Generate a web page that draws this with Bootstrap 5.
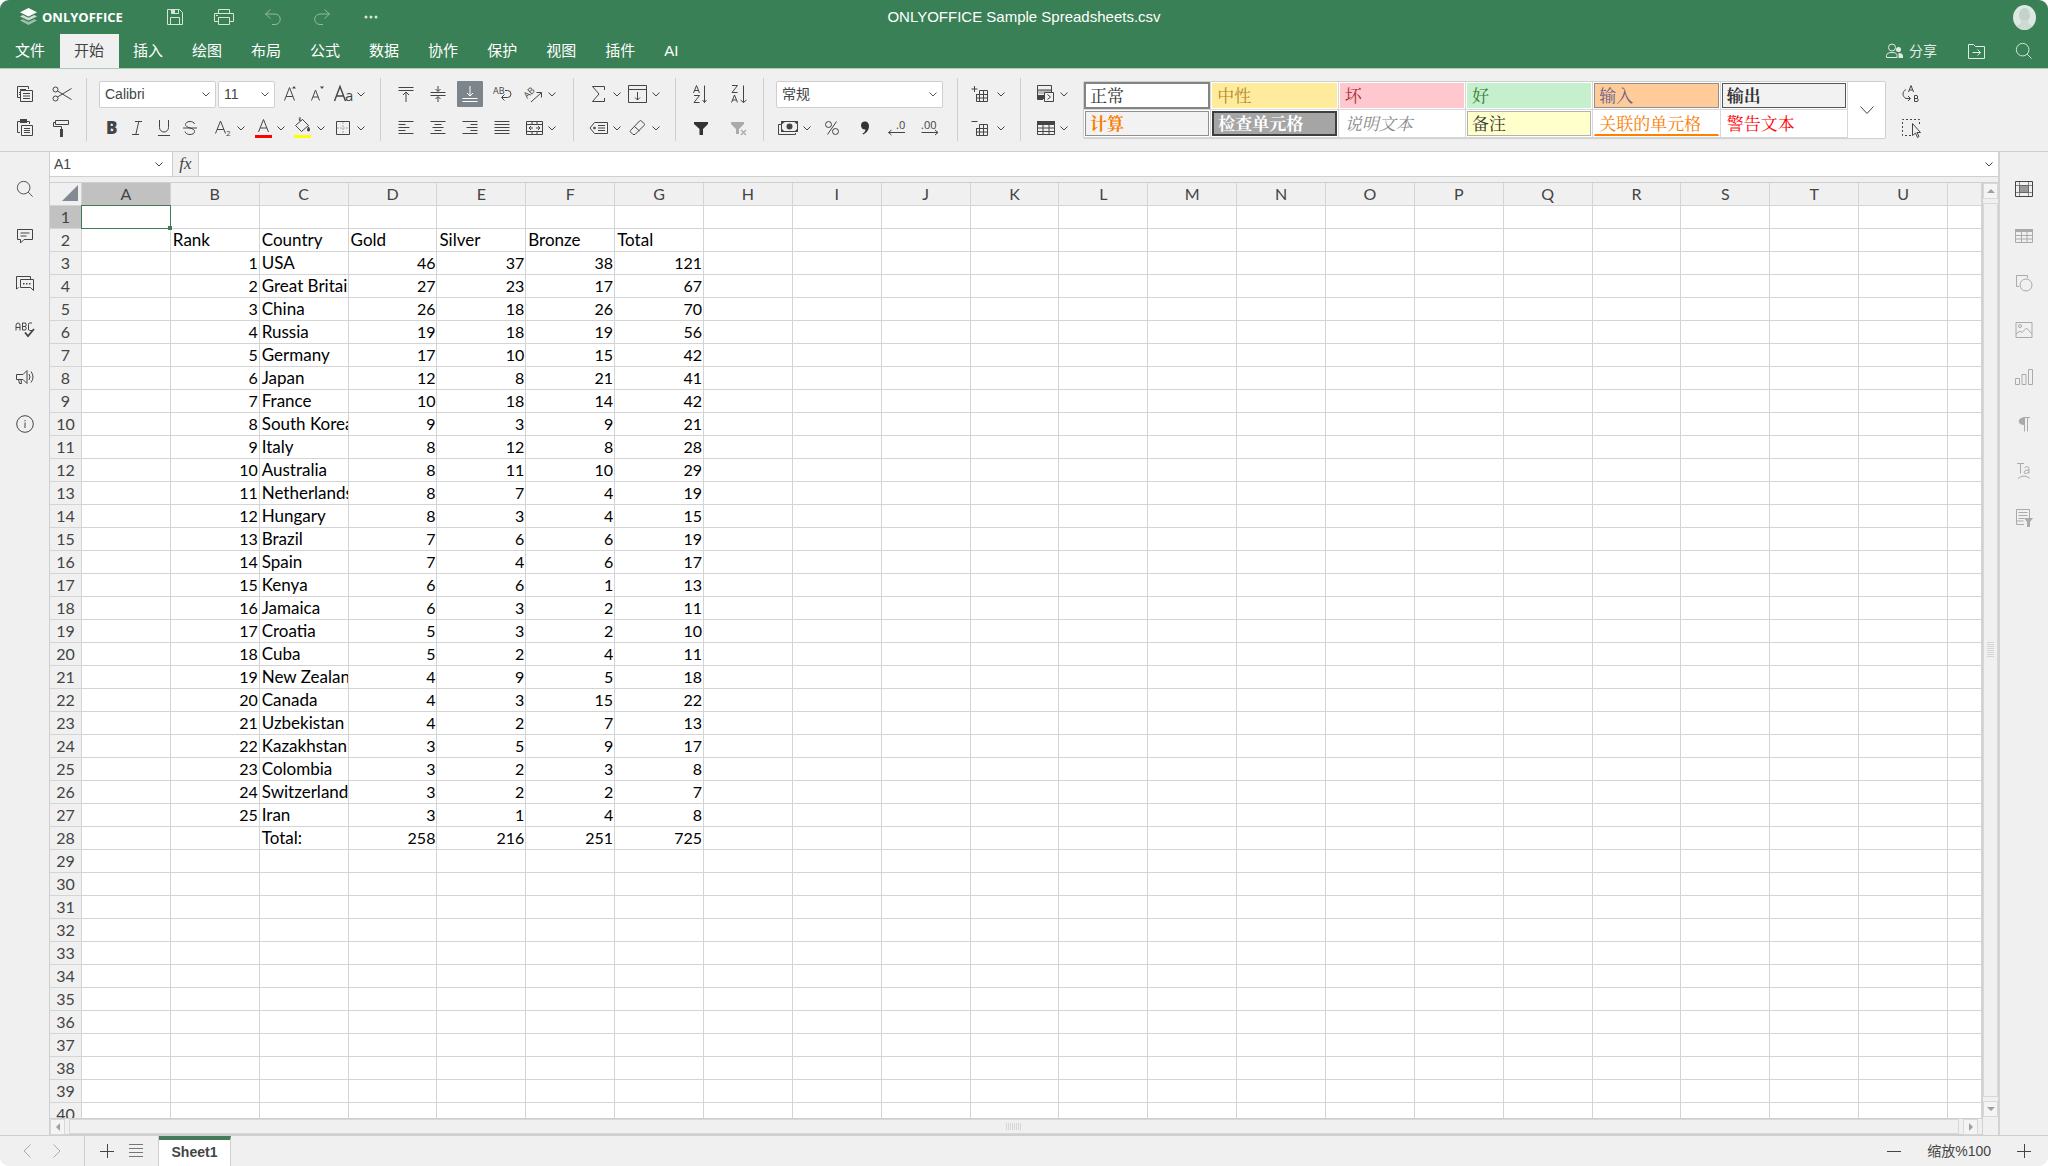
<!DOCTYPE html>
<html lang="zh-CN">
<head>
<meta charset="utf-8">
<meta name="viewport" content="width=device-width, initial-scale=1">
<title>ONLYOFFICE Sample Spreadsheets.csv</title>
<link href="https://cdn.jsdelivr.net/npm/bootstrap@5.3.0/dist/css/bootstrap.min.css" rel="stylesheet">
<style>
  :root { --brand: #3a8056; --chrome: #f0f0f0; --line: #cfcfcf; --ink: #444; }
  html, body { height: 100%; }
  body { font-family: "Liberation Sans", "Noto Sans CJK SC", sans-serif; font-size: 15px; color: var(--ink); background: #fff; overflow: hidden; }
  .app { height: 100vh; background: var(--chrome); border-radius: 9px; overflow: hidden; }
  svg { display: block; fill: none; stroke: currentColor; stroke-width: 1; flex: none; overflow: visible; }
  svg .f { fill: currentColor; stroke: none; }
  svg text { fill: currentColor; stroke: none; font-family: "Open Sans", sans-serif; }
  button { border: 0; background: none; padding: 0; color: inherit; }

  /* title bar and tabs */
  .app-head { background: var(--brand); color: #fff; border-bottom: 1px solid #a9cbb7; }
  .title-row { display: grid; grid-template-columns: 1fr auto 1fr; height: 34px; align-items: center; font-size: 15px; }
  .brand { width: 126px; margin-left: 19px; color: #fff; font: bold 13px "Open Sans", sans-serif; }
  .quick { margin-left: 17px; gap: 23px; }
  .quick button { width: 26px; height: 26px; opacity: .8; }
  .quick button:disabled { opacity: .45; }
  .avatar { width: 23px; height: 25px; margin-right: 12px; border-radius: 50%; background: #dce8e1; overflow: hidden; }
  .menu-tabs { height: 34px; padding-left: 1px; }
  .menu-tabs .nav-link { padding: 0 15px 0 14px; line-height: 33px; color: #fff; font-size: 15px; border-radius: 0; }
  .menu-tabs .nav-link.active { background: var(--chrome); color: var(--ink); }
  .head-tools { gap: 26px; padding-right: 15px; font-size: 14px; opacity: .85; }
  .head-tools .share { gap: 6px; }

  /* toolbar */
  .ribbon { height: 84px; border-bottom: 1px solid var(--line); }
  .tool-group { display: flex; flex-direction: column; gap: 8px; padding: 12px 11px 0 12px; }
  .tool-group > div { display: flex; height: 26px; align-items: center; }
  .tool-group.ruled { border-right: 1px solid var(--line); margin: 9px 0; padding-top: 3px; }
  .tool-group.mid { padding-right: 14px; }
  .tool-group.wide { padding-right: 16px; }
  .tool-group.last { padding-right: 124px; }
  .g-clip > div { gap: 11px; }
  .g-align > div { gap: 6px; }
  .g-sum > div { gap: 3px; }
  .g-sort > div { gap: 12px; }
  .tb { width: 26px; height: 26px; display: flex; align-items: center; justify-content: center; flex: none; border-radius: 1px; }
  .tb.drop { width: 36px; }
  .tb.on { background: #7d858c; color: #fff; }
  .tb.off { color: #aaa; }
  .form-select.pick { height: 27px; padding: 0 24px 0 5px; font-size: 14px; line-height: 25px; color: var(--ink); border: 1px solid var(--line); border-radius: 2px; background-color: #fff; background-position: right 5px center; background-size: 8px 8px;
    --bs-form-select-bg-img: url("data:image/svg+xml,%3csvg xmlns='http://www.w3.org/2000/svg' viewBox='0 0 8 8'%3e%3cpath fill='none' stroke='%23555' d='M.5 2.5 4 6l3.5-3.5'/%3e%3c/svg%3e"); }
  .pick.w-name { width: 117px; margin-right: 2px; }
  .pick.w-size { width: 57px; margin-right: 3px; }
  .pick.w-format { width: 167px; }

  /* cell style gallery */
  .gallery { flex: 1 1 0; min-width: 0; height: 58px; margin-top: 12px; background: #fff; border: 1px solid var(--line); border-radius: 2px; }
  .gallery-grid { display: grid; grid-template-columns: repeat(6, 1fr); grid-auto-rows: 28px; flex: 1; min-width: 0; }
  .swatch { border: solid #d8d8d8; border-width: 0 1px 1px 0; padding: 1px; }
  .swatch span { display: block; height: 100%; padding-left: 4px; border: 1px solid transparent; text-align: left; white-space: nowrap; overflow: hidden; font: 17px/22px "Noto Serif CJK SC", "Noto Sans CJK SC", serif; color: #333; }
  .swatch.sel { padding: 0; }
  .swatch.sel span { border: 2px solid #848484; line-height: 22px; }
  .s-neutral span { background: #ffeb9c; color: #b3862f; }
  .s-bad span { background: #ffc7ce; color: #b02a37; }
  .s-good span { background: #c6efce; color: #2f7d32; }
  .s-input span { background: #ffcc99; border-color: #8f8f8f; color: #66608a; }
  .s-output span { background: #f2f2f2; border-color: #555; font-weight: bold; }
  .s-calc span { background: #f2f2f2; border-color: #8f8f8f; color: #fa7d00; font-weight: bold; }
  .s-check span { background: #a5a5a5; border: 2px solid #3f3f3f; line-height: 20px; color: #fff; font-weight: bold; }
  .s-explain span { color: #8a8a8a; font-style: italic; }
  .s-note span { background: #ffffcc; border-color: #b2b2b2; }
  .s-link span { color: #fa7d00; border-bottom: 2px solid #ff8001; }
  .s-warn span { color: #f00; }
  .gallery-more { width: 37px; display: flex; align-items: center; justify-content: center; }

  /* side bars */
  .work { min-height: 0; }
  .side { width: 50px; padding-top: 24px; display: flex; flex-direction: column; align-items: center; gap: 21px; flex: none; }
  .side.start { border-right: 1px solid var(--line); }
  .side.end { border-left: 2px solid #d3d3d3; color: #aaa; }
  .side .current { color: #444; }
  .pane { min-width: 0; }

  /* formula bar */
  .formula { height: 25px; border-bottom: 1px solid var(--line); background: #fff; }
  .formula input { border: 0; outline: 0; background: none; font-size: 14px; color: var(--ink); padding: 0 0 0 4px; min-width: 0; }
  .name-box { width: 123px; border-right: 1px solid var(--line); }
  .name-box input { width: 90px; }
  .fx { width: 26px; background: var(--chrome); border-right: 1px solid var(--line); font: italic 17px/24px "Liberation Serif", serif; }

  /* grid */
  .sheet-pane { margin-top: 5px; border-top: 1px solid var(--line); min-height: 0; }
  .grid-view { overflow: hidden; background: #fff; }
  .sheet { width: 100%; table-layout: fixed; border-collapse: separate; border-spacing: 0; font: 17px/22px Lato, sans-serif; color: #000; }
  .sheet col.rowno { width: 32px; }
  .sheet col.data { width: 4.6%; }
  .sheet th, .sheet td { height: 23px; padding: 0 2px; border: solid #d4d4d4; border-width: 0 1px 1px 0; white-space: nowrap; overflow: hidden; }
  .sheet th { background: var(--chrome); color: var(--ink); font-size: 16px; font-weight: normal; text-align: center; }
  .sheet .num { font-size: 16px; text-align: right; padding-right: 1px; }
  .sheet .hot { background: #c1c1c1; }
  .sheet .cursor { position: relative; overflow: visible; }
  .sheet .cursor::before { content: ""; position: absolute; inset: -1px; border: 1px solid #3f7b57; }
  .sheet .cursor::after { content: ""; position: absolute; right: -2px; bottom: -2px; width: 4px; height: 4px; background: #3f7b57; }
  .sheet .corner { padding: 0 2px 2px 0; }
  .sheet .corner svg { margin-left: auto; color: #848a94; }
  .bar { background: var(--chrome); color: #a0a0a0; }
  .bar.v { width: 16px; border-left: 1px solid var(--line); }
  .bar.h { height: 17px; border-top: 1px solid var(--line); border-bottom: 1px solid var(--line); }
  .bar button { width: 15px; height: 16px; display: flex; align-items: center; justify-content: center; border: 1px solid #d8d8d8; background: #f4f4f4; flex: none; }
  .bar .thumb { flex: 1; display: flex; align-items: center; justify-content: center; border: 1px solid #d8d8d8; color: #d6d6d6; }
  .bar .scroll-end { margin-bottom: 18px; }

  /* status bar */
  .status { height: 31px; border-top: 1px solid var(--line); font-size: 14px; }
  .status .cellgroup { height: 30px; border-right: 1px solid var(--line); display: flex; align-items: center; }
  .cellgroup.nav-arrows { width: 85px; padding-left: 14px; gap: 4px; color: #aaa; }
  .cellgroup.sheet-ops { width: 74px; padding-left: 9px; gap: 3px; }
  .zoom-ctl { gap: 20px; padding-right: 11px; }
  .sheet-tab { width: 72px; height: 30px; background: #fff; border-top: 4px solid #457a5b; border-right: 1px solid var(--line); font-size: 14px; font-weight: bold; color: var(--ink); text-decoration: none; text-align: center; line-height: 25px; }
</style>
<script src="https://cdn.jsdelivr.net/npm/bootstrap@5.3.0/dist/js/bootstrap.bundle.min.js"></script>
</head>
<body>
<svg width="0" height="0" class="position-absolute">
  <symbol id="car" viewBox="0 0 10 10"><path d="M1.5 3.5 5 7l3.5-3.5"/></symbol>
  <symbol id="find" viewBox="0 0 20 20"><circle cx="8.500" cy="8.500" r="7"/><path d="m13.500 13.500 5 5"/></symbol>
</svg>
<div class="app d-flex flex-column">
  <header class="app-head">
    <div class="title-row">
      <div class="d-flex align-items-center">
        <a class="brand d-flex align-items-center gap-1 text-decoration-none" href="#">
          <svg width="19" height="18" viewBox="0 0 19 18"><path class="f" d="M9.500 0 18 4.200 9.500 8.400 1 4.200z"/><path class="f" opacity=".75" d="M1 8.400 3.800 7l5.700 2.800L15.200 7 18 8.400l-8.500 4.200z"/><path class="f" opacity=".5" d="m1 12.600 2.800-1.400L9.500 14l5.700-2.800 2.800 1.400L9.500 17z"/></svg>
          ONLYOFFICE</a>
        <div class="quick d-flex">
          <button class="tb" aria-label="保存"><svg width="18" height="18"><path d="M1.500 1.500h12l3 3v12h-15zM4.500 16V9.500h9V16M5.500 1.500v4h7v-4"/><path class="f" d="M6 2h3v3H6z"/></svg></button>
          <button class="tb" aria-label="打印"><svg width="20" height="18"><path d="M4.500 5V1.500h11V5M4.500 13.500h-4v-8h19v8h-4M4.500 9.500h11v7h-11zM2 7.500h2"/></svg></button>
          <button class="tb" disabled aria-label="撤消"><svg width="18" height="18"><path d="M6.500 1.500 1.500 6l5 4.500M1.500 6H11a5 5 0 0 1 0 10.500H8"/></svg></button>
          <button class="tb" disabled aria-label="重做"><svg width="18" height="18"><path d="M11.500 1.500l5 4.500-5 4.500M16.500 6H7a5 5 0 0 0 0 10.500h3"/></svg></button>
          <button class="tb" aria-label="更多"><svg width="14" height="4"><circle class="f" cx="2" cy="2" r="1.500"/><circle class="f" cx="7" cy="2" r="1.500"/><circle class="f" cx="12" cy="2" r="1.500"/></svg></button>
        </div>
      </div>
      <div>ONLYOFFICE Sample Spreadsheets.csv</div>
      <div class="avatar ms-auto"><svg width="23" height="25"><ellipse cx="11.500" cy="10" rx="5.500" ry="7" fill="#c3d3ca" stroke="none"/><path d="M8 15h7v3l4 3v4H4v-4l4-3z" fill="#cddad3" stroke="none"/></svg></div>
    </div>
    <div class="d-flex justify-content-between">
      <nav class="menu-tabs nav flex-nowrap">
        <a class="nav-link" href="#">文件</a><a class="nav-link active" href="#">开始</a><a class="nav-link" href="#">插入</a><a class="nav-link" href="#">绘图</a><a class="nav-link" href="#">布局</a><a class="nav-link" href="#">公式</a><a class="nav-link" href="#">数据</a><a class="nav-link" href="#">协作</a><a class="nav-link" href="#">保护</a><a class="nav-link" href="#">视图</a><a class="nav-link" href="#">插件</a><a class="nav-link" href="#">AI</a>
      </nav>
      <div class="head-tools d-flex align-items-center">
        <button class="share d-flex align-items-center"><svg width="17" height="16"><circle cx="6" cy="4.500" r="3.500"/><path d="M.5 14.500v-2c0-2 2-3 5.500-3s5 1 5 3v2z"/><circle class="f" cx="12.500" cy="6.500" r="2.500"/><path class="f" d="M12.500 10c3 0 4.500 1 4.500 3v2h-4.500z"/></svg>分享</button>
        <button aria-label="打开文件位置" class="tb"><svg width="17" height="15"><path d="M.5.500h5l2 2h9v12H.5zM4.500 8.500h8M9.500 5.500l3 3-3 3"/></svg></button>
        <button aria-label="搜索" class="d-flex"><svg width="18" height="18"><use href="#find"/></svg></button>
      </div>
    </div>
  </header>

  <div class="ribbon d-flex align-items-start" role="toolbar" aria-label="开始">
    <div class="tool-group ruled g-clip">
      <div>
        <button class="tb" aria-label="复制"><svg width="18" height="18"><path d="M4 12.500H1.500v-11h11V4M4 4.500h6"/><path d="M4.500 5.500h12v11h-12zM7 8.500h7M7 11h7M7 13.500h7M3 7.500h1.500M3 9.500h1.500"/></svg></button>
        <button class="tb" aria-label="剪切"><svg width="20" height="18"><circle cx="3.500" cy="4.500" r="2.500"/><circle cx="3.500" cy="13.500" r="2.500"/><path d="M5.500 6 19.500 14.500M5.500 12 19.500 3.500"/></svg></button>
      </div>
      <div>
        <button class="tb" aria-label="粘贴"><svg width="18" height="18"><path d="M4 13.500H1.500v-11h12V5"/><path class="f" d="M4 0h7v4H4z"/><path d="M5.500 6.500h11v10h-11zM8 9.500h6M8 11.500h6M8 13.500h6"/></svg></button>
        <button class="tb" aria-label="格式刷"><svg width="18" height="18"><path d="M2.500 1.500h13v4h-13zM2.500 3.500h-2v4h8V10"/><path class="f" d="M7 10h3v8H7z"/></svg></button>
      </div>
    </div>
    <div class="tool-group ruled mid">
      <div>
        <select class="form-select pick w-name" aria-label="字体"><option>Calibri</option></select>
        <select class="form-select pick w-size" aria-label="字号"><option>11</option></select>
        <button class="tb" aria-label="增大字号"><svg width="18" height="18"><path d="m2.500 15.500 5-13 5 13M4.200 11.500h6.600"/><path class="f" d="M10 3.500 12 1l2 2.500z"/></svg></button>
        <button class="tb" aria-label="减小字号"><svg width="18" height="18"><path d="m3.500 15.500 4-10.500 4 10.500M5 12h5.200"/><path class="f" d="M12 1.500h4L14 4z"/></svg></button>
        <button class="tb drop" aria-label="更改大小写"><svg width="26" height="20"><path stroke-width="1.400" d="m4.500 17 5.500-14.500L15.500 17M6.500 12h7"/><text x="15" y="17" font-size="15">a</text></svg><svg width="10" height="10"><use href="#car"/></svg></button>
      </div>
      <div class="justify-content-between">
        <div class="d-flex gap-1px">
          <button class="tb" aria-label="粗体"><svg width="16" height="18"><text x="2" y="15" font-size="17" font-weight="800">B</text></svg></button>
          <button class="tb" aria-label="斜体"><svg width="16" height="18"><path d="M5 2.500h7M2 15.500h7M8.800 2.500l-3 13"/></svg></button>
          <button class="tb" aria-label="下划线"><svg width="16" height="18"><path d="M3.500 1v7.500a4.500 4.500 0 0 0 9 0V1M2 16.500h12"/></svg></button>
          <button class="tb" aria-label="删除线"><svg width="16" height="18"><path d="M12.500 5C12 3 10 2.500 8 2.500c-3 0-4.500 1.500-4.500 3S5 8 8 9s4.500 1.500 4.500 3.500-2 3-4.500 3-4.500-1-5-3M1 9h14"/></svg></button>
        </div>
        <div class="d-flex gap-1">
          <button class="tb drop" aria-label="下标"><svg width="26" height="18"><path d="m5.500 14.500 5-12.500 5 12.500M7.200 10.500h6.600"/><text x="16" y="17" font-size="8">2</text></svg><svg width="10" height="10"><use href="#car"/></svg></button>
          <button class="tb drop" aria-label="字体颜色"><svg width="26" height="22"><path d="m8.500 15 5-12.500 5 12.500M10.200 11h6.600"/><path fill="#f00" stroke="none" d="M5 18h17v3H5z"/></svg><svg width="10" height="10"><use href="#car"/></svg></button>
          <button class="tb drop" aria-label="填充颜色"><svg width="26" height="22"><path d="m12.500 2.500 6 6-7 6-6-6zM10 0v4l-1-2.500M18 8l-6-6"/><path class="f" d="M18.500 9.500c2 2 2 5 0 5s-2-3 0-5z"/><path fill="#ff0" stroke="none" d="M4 18h17v3H4z"/></svg><svg width="10" height="10"><use href="#car"/></svg></button>
          <button class="tb drop" aria-label="边框"><svg width="26" height="16"><path d="M6.500 1.500h13v13h-13z"/><path stroke="#aaa" stroke-dasharray="2 1" d="M13 2v12M7 8h12"/></svg><svg width="10" height="10"><use href="#car"/></svg></button>
        </div>
      </div>
    </div>
    <div class="tool-group ruled wide g-align">
      <div>
        <button class="tb" aria-label="顶端对齐"><svg width="16" height="16"><path d="M.5 1.500h15M.5 4.500h15M8 16V6M5 9l3-3 3 3"/></svg></button>
        <button class="tb" aria-label="垂直居中"><svg width="16" height="16"><path d="M.5 6.500h15M.5 9.500h15M8 0v5M8 16v-5M5.500 3 8 5.500 10.500 3M5.500 13 8 10.500l2.500 2.500"/></svg></button>
        <button class="tb on" aria-label="底端对齐" aria-pressed="true"><svg width="16" height="18"><path d="M.5 13.500h15M.5 16.500h15M8 1v10M5 8l3 3 3-3"/></svg></button>
        <button class="tb" aria-label="自动换行"><svg width="20" height="18"><text x="1" y="9" font-size="9">AB</text><path d="M13 5.500h2.500a3.500 3.500 0 0 1 0 7H10M12.500 9.500l-3 3 3 3"/></svg></button>
        <button class="tb drop" aria-label="方向"><svg width="26" height="20"><text x="3" y="13" font-size="9" transform="rotate(-45 7 10)">AB</text><path d="m10 18 10-9M15.500 8.500h5v5"/></svg><svg width="10" height="10"><use href="#car"/></svg></button>
      </div>
      <div>
        <button class="tb" aria-label="左对齐"><svg width="16" height="14"><path d="M.5.500h15M.5 3.500h7M.5 6.500h11M.5 9.500h7M.5 12.500h15"/></svg></button>
        <button class="tb" aria-label="居中"><svg width="16" height="14"><path d="M.5.500h15M4.500 3.500h7M2.500 6.500h11M4.500 9.500h7M.5 12.500h15"/></svg></button>
        <button class="tb" aria-label="右对齐"><svg width="16" height="14"><path d="M.5.500h15M8.500 3.500h7M4.500 6.500h11M8.500 9.500h7M.5 12.500h15"/></svg></button>
        <button class="tb" aria-label="两端对齐"><svg width="16" height="14"><path d="M.5.500h15M.5 3.500h15M.5 6.500h15M.5 9.500h15M.5 12.500h15"/></svg></button>
        <button class="tb drop" aria-label="合并"><svg width="26" height="14"><path d="M5.500 .5h16v13h-16zM5.500 3.500h16M5.500 10.500h16M11 .5v3M16 .5v3M11 10.500v3M16 10.500v3M8 7h4M15 7h4M10 5 8 7l2 2M17 5l2 2-2 2"/></svg><svg width="10" height="10"><use href="#car"/></svg></button>
      </div>
    </div>
    <div class="tool-group ruled mid g-sum">
      <div>
        <button class="tb drop" aria-label="求和"><svg width="26" height="18"><path d="M18.500 5V1.500h-12L13 9l-6.500 7.500h12V13"/></svg><svg width="10" height="10"><use href="#car"/></svg></button>
        <button class="tb drop" aria-label="填充"><svg width="26" height="20"><path d="M3.500 1.500h18v17h-18zM3.500 5.500h18M12.500 8v8M10 13.500l2.500 2.500 2.500-2.500"/></svg><svg width="10" height="10"><use href="#car"/></svg></button>
      </div>
      <div>
        <button class="tb drop" aria-label="命名范围"><svg width="26" height="14"><path d="M8.500 1.500h13v11h-13L4 7zM12 4.500h7M12 7h7M12 9.500h7"/><circle class="f" cx="8.500" cy="7" r="1.300"/></svg><svg width="10" height="10"><use href="#car"/></svg></button>
        <button class="tb drop" aria-label="清除"><svg width="26" height="18"><path d="m5.500 11.500 9-9.500q1-1 2 0L19 4.500q1 1 0 2L10 15.500H8l-2.500-2.500q-.8-.7 0-1.500zM9.500 7.500l5 4.500"/></svg><svg width="10" height="10"><use href="#car"/></svg></button>
      </div>
    </div>
    <div class="tool-group ruled g-sort">
      <div>
        <button class="tb" aria-label="升序"><svg width="18" height="20"><path d="m1.500 9 3-7.500 3 7.500M2.500 6.500h4M2 11.500h5.500L2 18.500h5.500M12.500 1.500v17M10.500 16l2 2.500 2-2.500"/></svg></button>
        <button class="tb" aria-label="降序"><svg width="18" height="20"><path d="m1.500 18.500 3-7.500 3 7.500M2.500 16h4M2 1.500h5.500L2 8.500h5.500M13.500 1.500v17M10.500 16l3 2.500 3-2.500"/></svg></button>
      </div>
      <div>
        <button class="tb" aria-label="筛选"><svg width="16" height="16"><path fill="#333" stroke="none" d="M1 2h14v2L10 9v6H6.500V9L1 4z"/></svg></button>
        <button class="tb off" aria-label="清除筛选"><svg width="18" height="16"><path class="f" d="M1 2h13v2L9 9v5H6V9L1 4z"/><path stroke-width="1.300" d="m11 10 5 5M16 10l-5 5"/></svg></button>
      </div>
    </div>
    <div class="tool-group ruled mid">
      <div><select class="form-select pick w-format" aria-label="数字格式"><option>常规</option></select></div>
      <div class="justify-content-between">
        <button class="tb drop" aria-label="会计格式"><svg width="26" height="16"><path d="M5 4.500H2.500v10h17V13"/><path d="M5.500 1.500h16v10h-16z"/><path class="f" d="M5 1h5l-5 4zM22 1h-5l5 4zM5 12h4l-4-4zM22 12h-4l4-4z"/><circle class="f" cx="13.500" cy="6.500" r="3"/></svg><svg width="10" height="10"><use href="#car"/></svg></button>
        <button class="tb" aria-label="百分比"><svg width="16" height="16"><circle cx="4.500" cy="4.500" r="3"/><circle cx="11.500" cy="11.500" r="3"/><path d="M12.500 1.500l-9 13"/></svg></button>
        <button class="tb" aria-label="千位分隔"><svg width="12" height="16"><path fill="#333" stroke="none" d="M6 1.500c3 0 4 2.500 4 4.500 0 4-3 7.500-6 8.500l-.5-1C5.500 12.500 6.500 11 6.500 9.500 4 10 2 8 2 5.500s1.500-4 4-4z"/></svg></button>
        <button class="tb" aria-label="减少小数"><svg width="18" height="16"><text x="8" y="9" font-size="11">.0</text><path d="M.5 12.500H17M3.500 10l-3 2.500 3 2.500"/></svg></button>
        <button class="tb" aria-label="增加小数"><svg width="18" height="16"><text x="0" y="9" font-size="11">.00</text><path d="M.5 12.500H17M14 10l3 2.500-3 2.500"/></svg></button>
      </div>
    </div>
    <div class="tool-group ruled mid">
      <div><button class="tb drop" aria-label="插入单元格"><svg width="26" height="18"><path d="M4.500 1v6M1.500 4h6M9.500 5.500h8v11h-11V9M6.500 9.500h11M6.500 13h11M9.500 5.500v11M13.500 5.500v11" /></svg><svg width="10" height="10"><use href="#car"/></svg></button></div>
      <div><button class="tb drop" aria-label="删除单元格"><svg width="26" height="18"><path d="M1.500 2.500h6M9.500 5.500h8v11h-11V9M6.500 9.500h11M6.500 13h11M9.500 5.500v11M13.500 5.500v11" /></svg><svg width="10" height="10"><use href="#car"/></svg></button></div>
    </div>
    <div class="tool-group mid">
      <div><button class="tb drop" aria-label="条件格式"><svg width="26" height="20"><path d="M10 15.500H4.500v-14h14V8"/><path fill="#bbb" stroke="none" d="M5 6h13v4H5z"/><path class="f" d="M4 11h7v4H4z"/><path fill="#f0f0f0" d="M11.500 8.500h9v9h-9z"/><path d="M4.500 6h14M14.500 10.500l3 2.500-3 2.500"/></svg><svg width="10" height="10"><use href="#car"/></svg></button></div>
      <div><button class="tb drop" aria-label="表格样式"><svg width="26" height="16"><path class="f" d="M4 1h18v4H4z"/><path d="M4.500 2v12.500h17V2M4.500 8h17M4.500 11.500h17M10 5v9.500M16 5v9.500"/></svg><svg width="10" height="10"><use href="#car"/></svg></button></div>
    </div>
    <div class="gallery d-flex">
      <div class="gallery-grid">
        <button class="swatch sel"><span>正常</span></button><button class="swatch s-neutral"><span>中性</span></button><button class="swatch s-bad"><span>坏</span></button><button class="swatch s-good"><span>好</span></button><button class="swatch s-input"><span>输入</span></button><button class="swatch s-output"><span>输出</span></button>
        <button class="swatch s-calc"><span>计算</span></button><button class="swatch s-check"><span>检查单元格</span></button><button class="swatch s-explain"><span>说明文本</span></button><button class="swatch s-note"><span>备注</span></button><button class="swatch s-link"><span>关联的单元格</span></button><button class="swatch s-warn"><span>警告文本</span></button>
      </div>
      <button class="gallery-more" aria-label="更多样式"><svg width="16" height="10"><path d="m1.500 1.500 6.500 7 6.500-7"/></svg></button>
    </div>
    <div class="tool-group last">
      <div><button class="tb" aria-label="替换"><svg width="20" height="20"><path d="m7.500 8 2.500-6.500L12.500 8M8.500 6h3M13.500 11.500v6h3q1.500-1.500 0-3h-3M16 14.500q1.500-1.500 0-3h-2.500M5 5.500c-4 2-4 7 0 9h4M7 12l2.500 2.500L7 17"/></svg></button></div>
      <div><button class="tb" aria-label="全选"><svg width="20" height="20"><path stroke-dasharray="2 2" d="M10 17.500H1.500v-16h17V8"/><path d="M11.500 5.500v12l3-2.500 2 4.500 1.500-1-2-4h3.500z"/></svg></button></div>
    </div>
  </div>

  <div class="work d-flex flex-grow-1">
    <aside class="side start">
      <button class="tb" aria-label="搜索"><svg width="18" height="18"><use href="#find"/></svg></button>
      <button class="tb" aria-label="批注"><svg width="18" height="16"><path d="M1.500 1.500h15v10H8L4.500 15v-3.500h-3zM4.500 5h9M4.500 8h6"/></svg></button>
      <button class="tb" aria-label="聊天"><svg width="20" height="16"><path d="M3.500 12.500 1.500 14V1.500h14V4M5.500 4.500h13v11L15.500 12.500h-10z"/><path class="f" d="M8 8h1.500v1.500H8zM11 8h1.500v1.500H11zM14 8h1.500v1.500H14z"/></svg></button>
      <button class="tb" aria-label="拼写检查"><svg width="20" height="18"><path d="M1 9.500v-5q0-2.500 2-2.500t2 2.500v5M1 6.500h4M7.500 2v7h3q1.500-1.500 0-3.500h-3M7.500 2h3q1.500 2 0 3.500M17 2h-2.500q-1 0-1 1.500V8q0 1.500 1 1.500H17"/><path stroke-width="1.800" d="m10 11.500 3 3.500 6-7"/></svg></button>
      <button class="tb" aria-label="反馈"><svg width="20" height="18"><path d="M1.500 6.500H8l4-4v13l-4-4H1.500zM3.500 11.500l1 4h2l-.5-4M14 6q2 3 0 6M16 3.500q4 5.500 0 11"/></svg></button>
      <button class="tb" aria-label="关于"><svg width="18" height="18"><circle cx="9" cy="9" r="8.300"/><path d="M9 7.500V13M9 5v1.300"/></svg></button>
    </aside>
    <main class="pane flex-grow-1 d-flex flex-column">
      <div class="formula d-flex">
        <div class="name-box d-flex align-items-center"><input class="flex-grow-1" aria-label="名称框" value="A1"><button class="me-2" aria-label="名称列表"><svg width="10" height="10"><use href="#car"/></svg></button></div>
        <button class="fx" aria-label="插入函数">fx</button>
        <input class="flex-grow-1" aria-label="编辑栏">
        <button class="me-1" aria-label="展开编辑栏"><svg width="10" height="10"><use href="#car"/></svg></button>
      </div>
      <div class="sheet-pane d-flex flex-grow-1">
        <div class="pane d-flex flex-column flex-grow-1">
          <div class="grid-view flex-grow-1">
            <table class="sheet"><colgroup id="cols"></colgroup><thead><tr id="letters"></tr></thead><tbody id="rows"></tbody></table>
          </div>
          <div class="bar h d-flex">
            <button class="me-1" aria-label="向左滚动"><svg width="6" height="8"><path class="f" d="M5 0v8L1 4z"/></svg></button>
            <div class="thumb"><svg width="16" height="7"><path d="M.5 0v7M2.500 0v7M4.500 0v7M6.500 0v7M8.500 0v7M10.500 0v7M12.500 0v7M14.500 0v7"/></svg></div>
            <button class="mx-1" aria-label="向右滚动"><svg width="6" height="8"><path class="f" d="M1 0v8l4-4z"/></svg></button>
          </div>
        </div>
        <div class="bar v d-flex flex-column">
          <button aria-label="向上滚动"><svg width="8" height="6"><path class="f" d="M0 5h8L4 1z"/></svg></button>
          <div class="thumb my-1"><svg width="7" height="16"><path d="M0 .5h7M0 2.500h7M0 4.500h7M0 6.500h7M0 8.500h7M0 10.500h7M0 12.500h7M0 14.500h7"/></svg></div>
          <button class="scroll-end" aria-label="向下滚动"><svg width="8" height="6"><path class="f" d="M0 1h8L4 5z"/></svg></button>
        </div>
      </div>
    </main>
    <aside class="side end">
      <button class="tb current" aria-label="单元格设置"><svg width="20" height="16"><path d="M1.500 .5h17v15h-17z"/><path stroke="#888" d="M5.500 1v14M14.500 1v14M2 4.500h16M2 11.500h16"/><path fill="#999" stroke="#666" d="M5.500 4.500h9v7h-9z"/></svg></button>
      <button class="tb" aria-label="表格设置"><svg width="18" height="14"><path class="f" d="M0 0h18v3H0z"/><path d="M.5 1v12.500h17V1M.5 6.500h17M.5 10h17M6.500 3v10.500M12 3v10.500"/></svg></button>
      <button class="tb" aria-label="形状设置"><svg width="18" height="18"><path d="M4 12.500H1.500v-11h11V4"/><circle cx="11" cy="11" r="6"/></svg></button>
      <button class="tb" aria-label="图像设置"><svg width="18" height="18"><path d="M1 1.500h16v15H1zM1 13l4-3 2 1.500L11.500 7l5.500 6"/><circle cx="5" cy="5" r="1.500"/></svg></button>
      <button class="tb" aria-label="图表设置"><svg width="20" height="18"><path d="M1.500 10.500h4v6h-4zM8 6.500h4v10H8zM14.500 1.500h4v15h-4z"/></svg></button>
      <button class="tb" aria-label="段落设置"><svg width="14" height="16"><path class="f" d="M7 2v7C0 9 0 1.500 7 1.500z"/><path d="M6 1.500h7M7.500 1.500v14M10.500 1.500v14"/></svg></button>
      <button class="tb" aria-label="文字艺术设置"><svg width="16" height="18"><path d="M1 1.500h7M4.500 1.500v10M2 16.500q6-5 12 0"/><path d="M8.500 5.500q4-2 4.500 1v5M13 8q-5 0-5 2t2.500 1.500L13 10"/></svg></button>
      <button class="tb" aria-label="切片器设置"><svg width="18" height="20"><path d="M9 16.500H1.500v-15h13V10M3.500 4.500h9M3.500 7.500h9M3.500 10.500h6M1.500 13h7"/><path class="f" d="M9 10h9l-3 4v5h-3v-5z"/></svg></button>
    </aside>
  </div>

  <footer class="status d-flex align-items-center">
    <div class="cellgroup nav-arrows">
      <button class="tb" aria-label="上一个工作表"><svg width="8" height="14"><path d="M7.500.500 1 7l6.500 6.500"/></svg></button>
      <button class="tb" aria-label="下一个工作表"><svg width="8" height="14"><path d="M.5.500 7 7 .5 13.500"/></svg></button>
    </div>
    <div class="cellgroup sheet-ops">
      <button class="tb" aria-label="添加工作表"><svg width="14" height="14"><path d="M0 7.500h14M7.500 0v14"/></svg></button>
      <button class="tb" aria-label="工作表列表"><svg width="14" height="14"><path stroke="#777" d="M0 .5h14M0 4.500h14M0 8.500h14M0 12.500h14"/></svg></button>
    </div>
    <a class="sheet-tab" href="#">Sheet1</a>
    <div class="zoom-ctl ms-auto d-flex align-items-center">
      <button class="tb" aria-label="缩小"><svg width="14" height="14"><path d="M0 7.500h14"/></svg></button>
      <span>缩放%100</span>
      <button class="tb" aria-label="放大"><svg width="14" height="14"><path d="M0 7.500h14M7.500 0v14"/></svg></button>
    </div>
  </footer>
</div>
<script>
  const letters = "ABCDEFGHIJKLMNOPQRSTU".split("");
  const medals = [
    ["USA",46,37,38,121],["Great Britain",27,23,17,67],["China",26,18,26,70],["Russia",19,18,19,56],
    ["Germany",17,10,15,42],["Japan",12,8,21,41],["France",10,18,14,42],["South Korea",9,3,9,21],
    ["Italy",8,12,8,28],["Australia",8,11,10,29],["Netherlands",8,7,4,19],["Hungary",8,3,4,15],
    ["Brazil",7,6,6,19],["Spain",7,4,6,17],["Kenya",6,6,1,13],["Jamaica",6,3,2,11],["Croatia",5,3,2,10],
    ["Cuba",5,2,4,11],["New Zealand",4,9,5,18],["Canada",4,3,15,22],["Uzbekistan",4,2,7,13],
    ["Kazakhstan",3,5,9,17],["Colombia",3,2,3,8],["Switzerland",3,2,2,7],["Iran",3,1,4,8]];
  const data = { 2: ["Rank","Country","Gold","Silver","Bronze","Total"], 28: ["","Total:",258,216,251,725] };
  medals.forEach((m, i) => data[i + 3] = [i + 1, ...m]);

  document.getElementById("cols").innerHTML = '<col class="rowno">' + '<col class="data">'.repeat(21) + '<col>';
  document.getElementById("letters").innerHTML =
    '<th class="corner" aria-label="全选"><svg width="18" height="18"><path class="f" d="M17 1v16H1z"/></svg></th>' +
    letters.map((l, i) => `<th scope="col"${i ? "" : ' class="hot"'}>${l}</th>`).join("") + "<th></th>";
  let html = "";
  for (let r = 1; r <= 40; r++) {
    html += `<tr><th scope="row"${r === 1 ? ' class="hot"' : ""}>${r}</th>`;
    for (let c = 0; c < 22; c++) {
      const v = c && data[r] ? data[r][c - 1] ?? "" : "";
      const cls = r === 1 && c === 0 ? "cursor" : typeof v === "number" ? "num" : "";
      html += `<td${cls ? ` class="${cls}"` : ""}>${v}</td>`;
    }
    html += "</tr>";
  }
  document.getElementById("rows").innerHTML = html;
</script>
</body>
</html>
